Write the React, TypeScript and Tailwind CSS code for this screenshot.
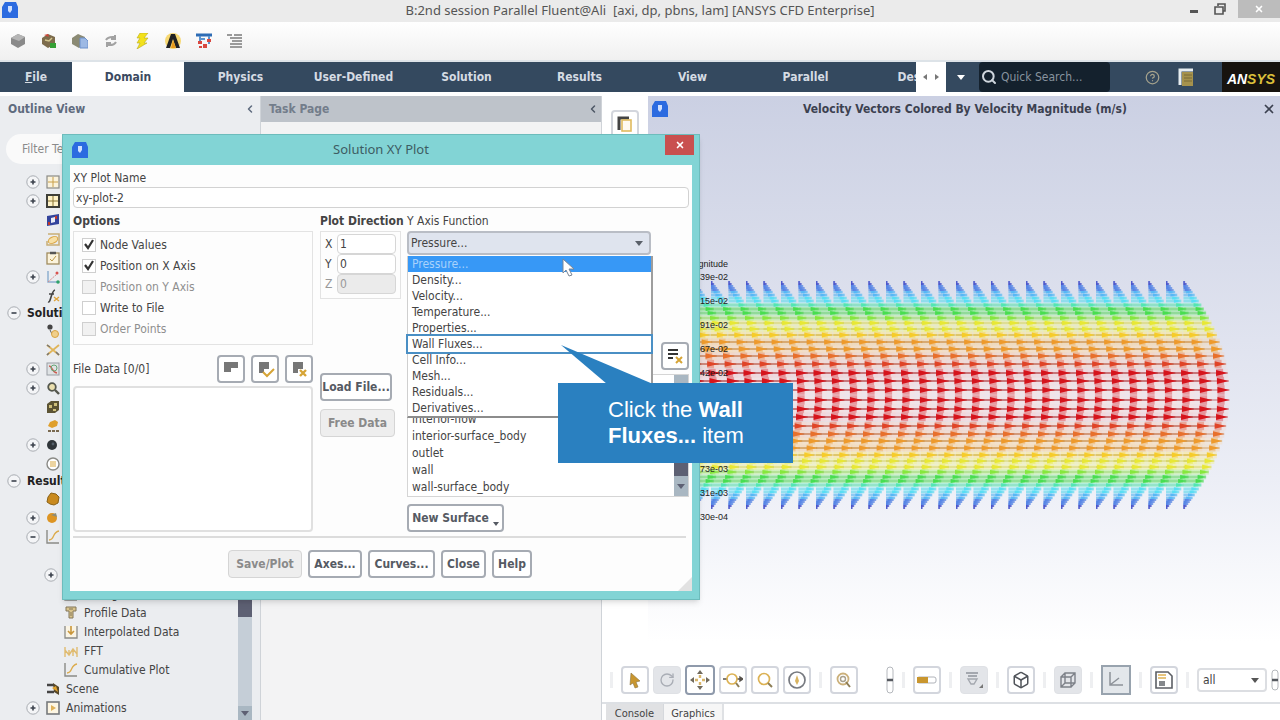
import type { ReactNode } from "react";
import { ChevronLeft, X, Search, CircleHelp, RotateCw, Box } from "lucide-react";

const TABS = ["Physics", "User-Defined", "Solution", "Results", "View", "Parallel", "Design"];

const OPTIONS = [
  { label: "Node Values", checked: true, disabled: false },
  { label: "Position on X Axis", checked: true, disabled: false },
  { label: "Position on Y Axis", checked: false, disabled: true },
  { label: "Write to File", checked: false, disabled: false },
  { label: "Order Points", checked: false, disabled: true },
];

const FUNCTIONS = [
  "Pressure...",
  "Density...",
  "Velocity...",
  "Temperature...",
  "Properties...",
  "Wall Fluxes...",
  "Cell Info...",
  "Mesh...",
  "Residuals...",
  "Derivatives...",
];

const SURFACES = ["interior-flow", "interior-surface_body", "outlet", "wall", "wall-surface_body"];

const LEGEND = ["2.39e-02", "2.15e-02", "1.91e-02", "1.67e-02", "1.42e-02", "1.19e-02", "9.50e-03", "7.12e-03", "4.73e-03", "2.31e-03", "1.30e-04"];

/* ---------- tree icons, 14x14 ---------- */

const ICONS: Record<string, ReactNode> = {
  grid: (
    <>
      <rect x="1" y="1" width="12" height="12" fill="#fbf3dc" stroke="#8b8b86" strokeWidth="1.2" />
      <path d="M7 2v10M2 7h10" stroke="#c9a04a" />
    </>
  ),
  gridDark: (
    <>
      <rect x="1" y="1" width="12" height="12" fill="#fff3c8" stroke="#3f3f38" strokeWidth="2" />
      <path d="M7 2v10M2 7h10" stroke="#8a7433" />
    </>
  ),
  flag: (
    <>
      <path d="M1 3l12-2v10L1 13z" fill="#33449c" />
      <path d="M5 5l4-1v5l-4 1z" fill="#e8ebf5" />
      <path d="M10 3v3M3 9v3" stroke="#c0392b" strokeWidth="2" />
    </>
  ),
  ring: (
    <>
      <path d="M2 2h11v11H1V9" fill="none" stroke="#c9ae76" strokeWidth="1.5" />
      <ellipse cx="7" cy="8" rx="5" ry="3" fill="#f7dfa4" stroke="#d9a441" transform="rotate(-25 7 8)" />
    </>
  ),
  clip: (
    <>
      <rect x="1" y="2" width="12" height="11" fill="#fbf3dc" stroke="#a08c5e" strokeWidth="1.3" />
      <path d="M4 2h6" stroke="#555" strokeWidth="2.5" />
      <path d="M4 8l2 2 4-5" fill="none" stroke="#b99545" />
    </>
  ),
  axes: (
    <>
      <path d="M2 1v11h10" fill="none" stroke="#8fb0cf" strokeWidth="1.5" />
      <path d="M2 12L11 4" stroke="#d58b8b" strokeDasharray="2 1" />
      <circle cx="11" cy="3" r="1.5" fill="#d9534f" />
      <circle cx="12" cy="12" r="1.8" fill="#2fa36b" />
    </>
  ),
  fx: (
    <>
      <path d="M2 13c3 1 3-11 7-12M3 5h5" fill="none" stroke="#444" strokeWidth="1.6" />
      <path d="M8 8l5 4M13 8l-5 4" stroke="#dfa53c" strokeWidth="1.4" />
    </>
  ),
  dots: (
    <>
      <circle cx="4" cy="3" r="2.6" fill="#444" />
      <path d="M4 6l2 4" stroke="#555" />
      <circle cx="9" cy="10" r="3.5" fill="#f0cf8a" stroke="#d9a441" />
    </>
  ),
  cross: (
    <>
      <path d="M1 2l12 10M13 2L1 12" stroke="#e0b55a" strokeWidth="1.8" />
      <path d="M1 2l3 2M10 9l3 3M1 12l2-2" stroke="#777" strokeWidth="1.5" />
    </>
  ),
  report: (
    <>
      <rect x="1" y="1" width="12" height="12" fill="#dfe3e5" stroke="#999ea3" />
      <path d="M3 4c4 0 2 6 8 7" fill="none" stroke="#cf5c50" strokeWidth="1.4" />
      <circle cx="8" cy="6" r="3" fill="none" stroke="#67a678" />
    </>
  ),
  magnify: (
    <>
      <circle cx="6" cy="6" r="3.8" fill="#eadfae" stroke="#55584e" strokeWidth="1.8" />
      <path d="M9 9l4 4" stroke="#55584e" strokeWidth="2.4" />
    </>
  ),
  cube: (
    <>
      <path d="M1 4l4-3h8v9l-4 3H1z" fill="#5c5434" />
      <path d="M3 5h3v3H3zM8 3h3v3H8zM7 9h3v2H7z" fill="#cfc07a" />
    </>
  ),
  cad: (
    <>
      <path d="M2 7l2-4 5-2 3 2-1 4-5 2z" fill="#dfa02c" />
      <path d="M2 12h3M6 12h3M10 12h3" stroke="#7a6a50" strokeWidth="2" />
    </>
  ),
  ball: (
    <>
      <circle cx="6" cy="7" r="5" fill="#30363a" />
      <circle cx="7" cy="6" r="1.4" fill="#55606a" />
    </>
  ),
  target: (
    <>
      <circle cx="7" cy="7" r="6" fill="#fff" stroke="#8a8a86" strokeWidth="1.4" />
      <path d="M4 5h6M4 7h6M4 9h6" stroke="#dba941" />
    </>
  ),
  surface: <path d="M2 5l3-4 5 1 3 3-1 6-4 2-4-1-3-2z" fill="#c98a1e" stroke="#8a6218" />,
  sphere: (
    <>
      <circle cx="6" cy="7" r="5" fill="#dd9524" />
      <path d="M5 4l5-2 1 4z" fill="#8d8d7a" />
    </>
  ),
  plot: (
    <>
      <path d="M1 0v13h12" fill="none" stroke="#8b8b86" strokeWidth="1.4" />
      <path d="M3 10c6 0 3-8 10-9" fill="none" stroke="#dcab4c" strokeWidth="1.3" />
    </>
  ),
  profile: (
    <>
      <path d="M2 1h10v4H9v7H5V5H2z" fill="#d9c48c" stroke="#82775a" />
      <path d="M5 3h4M6 7h2M6 9h2" stroke="#82775a" />
    </>
  ),
  interp: (
    <>
      <path d="M1 1v12h12V1" fill="#faf4e4" stroke="#8b8b86" strokeWidth="1.3" />
      <path d="M7 1v7M4 6l3 3 3-3" fill="none" stroke="#c9963a" strokeWidth="1.6" />
    </>
  ),
  fft: <path d="M1 3v10M13 3v10M1 6l4 5 4-6 4 5M5 6v6M9 5v7" fill="none" stroke="#e0bb70" strokeWidth="1.4" />,
  scene: (
    <>
      <path d="M1 3h7M1 10h7" stroke="#444" strokeWidth="2.4" />
      <path d="M7 1l6 4v8l-5-3z" fill="#57482a" />
      <path d="M6 6l4-2 2 6z" fill="#e0a22d" />
    </>
  ),
  anim: (
    <>
      <rect x="1" y="1" width="12" height="12" fill="#fdf6e3" stroke="#777a7d" strokeWidth="1.6" />
      <path d="M5 4l5 3-5 3z" fill="#e0b25a" />
    </>
  ),
};

function TreeIcon({ name }: { name: string }) {
  return (
    <svg viewBox="0 0 14 14" className="size-3.5 shrink-0">
      {ICONS[name]}
    </svg>
  );
}

type Row = { icon?: string; label?: string; toggle?: "plus" | "minus"; deep?: boolean };

const SETUP: Row[] = [
  { icon: "grid", toggle: "plus" },
  { icon: "gridDark", toggle: "plus" },
  { icon: "flag" },
  { icon: "ring" },
  { icon: "clip" },
  { icon: "axes", toggle: "plus" },
  { icon: "fx" },
];

const SOLUTION: Row[] = [
  { icon: "dots" },
  { icon: "cross" },
  { icon: "report", toggle: "plus" },
  { icon: "magnify", toggle: "plus" },
  { icon: "cube" },
  { icon: "cad" },
  { icon: "ball", toggle: "plus" },
  { icon: "target" },
];

const RESULTS: Row[] = [
  { icon: "surface" },
  { icon: "sphere", toggle: "plus" },
  { icon: "plot", toggle: "minus" },
  { icon: "plot", deep: true },
  { icon: "plot", deep: true, toggle: "plus" },
  { icon: "plot", label: "Histogram", deep: true },
  { icon: "profile", label: "Profile Data", deep: true },
  { icon: "interp", label: "Interpolated Data", deep: true },
  { icon: "fft", label: "FFT", deep: true },
  { icon: "plot", label: "Cumulative Plot", deep: true },
  { icon: "scene", label: "Scene" },
  { icon: "anim", label: "Animations", toggle: "plus" },
  { icon: "clip", toggle: "plus" },
];

function Toggle({ kind }: { kind?: "plus" | "minus" }) {
  if (!kind) return <span className="w-3.5 shrink-0" />;
  return (
    <button aria-label={kind === "plus" ? "Expand" : "Collapse"} className="size-3.5 shrink-0">
      <svg viewBox="0 0 14 14" className="size-3.5">
        <circle cx="7" cy="7" r="6.2" fill="#f4f5f7" stroke="#a9adb2" />
        <path d={kind === "plus" ? "M4.500 7h5M7 4.500v5" : "M4.500 7h5"} stroke="#3c434d" strokeWidth="1.6" />
      </svg>
    </button>
  );
}

function TreeRows({ rows }: { rows: Row[] }) {
  return (
    <>
      {rows.map((row, i) => (
        <li key={i} className={`flex h-[19px] items-center ${row.deep ? "pl-11" : "pl-[26px]"}`}>
          <Toggle kind={row.toggle} />
          <span className="ml-1.5 flex items-center gap-1.5">
            {row.icon && <TreeIcon name={row.icon} />}
            {row.label}
          </span>
        </li>
      ))}
    </>
  );
}

function TreeHeading({ label }: { label: string }) {
  return (
    <li className="flex h-4 items-center gap-1.5 pl-[7px] font-bold text-[#222]">
      <Toggle kind="minus" />
      {label}
    </li>
  );
}

/* ---------- small shared pieces ---------- */

function FluentMark() {
  return (
    <svg viewBox="0 0 16 16" className="size-4 shrink-0">
      <path d="M3 0h11l2 5v11H0V5z" fill="#2c6be0" />
      <path d="M6 4h4v4L8 11 6 9z" fill="#cfe0ff" />
    </svg>
  );
}

function Caret() {
  return (
    <svg viewBox="0 0 10 6" className="pointer-events-none h-[5px] w-2">
      <path d="M0 0h10L5 6z" fill="currentColor" />
    </svg>
  );
}

function DialogButton({ children, disabled, className = "" }: { children: ReactNode; disabled?: boolean; className?: string }) {
  return (
    <button
      disabled={disabled}
      className={`h-7 rounded text-xs font-bold whitespace-nowrap ${
        disabled ? "border border-[#d5d5d5] bg-[#eeeeee] text-[#8a8a8a]" : "border-2 border-[#a6abb3] bg-white text-[#555a63]"
      } ${className}`}
    >
      {children}
    </button>
  );
}

function IconButton({ label, children }: { label: string; children: ReactNode }) {
  return (
    <button aria-label={label} className="flex size-7 items-center justify-center rounded border-2 border-[#a6abb3] bg-white">
      <svg viewBox="0 0 20 20" className="size-5">
        {children}
      </svg>
    </button>
  );
}

function ToolButton({ label, children, state }: { label: string; children: ReactNode; state?: "disabled" | "active" }) {
  const look =
    state === "active"
      ? "size-[30px] border-2 border-[#8f9aab]"
      : state === "disabled"
        ? "size-7 border border-[#dfe1e5] bg-[#e3e5e9]"
        : "size-7 border-2 border-[#d3d6dd]";
  return (
    <button aria-label={label} className={`flex shrink-0 items-center justify-center rounded ${look}`}>
      <svg viewBox="0 0 20 20" className="size-5" fill="none">
        {children}
      </svg>
    </button>
  );
}

function Divider() {
  return (
    <span className="flex w-[11px] shrink-0 justify-center">
      <span className="h-4 w-[3px] bg-[#eeeff1]" />
    </span>
  );
}

/* ---------- velocity vectors ---------- */

const OFFSETS = [5, 14, 22, 31, 39, 46, 53, 60, 66, 72, 77, 82, 86, 90, 94, 97, 100, 103, 105, 107, 109, 111, 113];
const COLUMNS = Array.from({ length: 31 }, (_, i) => 535.5 - i * 17.5);

function speedColor(s: number) {
  // jet style ramp, blue at the wall and red on the axis
  const stops: [number, string][] = [
    [0.09, "#4a55cc"],
    [0.18, "#5585e6"],
    [0.25, "#58b8f6"],
    [0.36, "#58def4"],
    [0.41, "#52e6b4"],
    [0.52, "#48de50"],
    [0.58, "#86e83c"],
    [0.7, "#e8e834"],
    [0.76, "#f6cc2a"],
    [0.85, "#ee9a2c"],
    [0.91, "#e8702c"],
    [0.95, "#e04428"],
  ];
  const hit = stops.find(([limit]) => s < limit);
  return hit ? hit[1] : "#d6141c";
}

function VelocityVectors() {
  const rows = OFFSETS.flatMap((offset, i) => {
    const before = i === 0 ? -offset : OFFSETS[i - 1];
    const after = OFFSETS[i + 1] ?? offset + 2;
    const pitch = (after - before) / 2;
    return [
      { r: -offset, pitch },
      { r: offset, pitch },
    ];
  });
  return (
    <svg viewBox="0 0 590 240" className="h-60 w-[590px]">
      {rows.map(({ r, pitch }) => {
        const s = 1 - (r / 115) * (r / 115);
        const len = 46 * s;
        const head = Math.min(len, 5 + 7 * s);
        const half = 1 + 2 * s;
        const y = 120 + r;
        const color = speedColor(s);
        return (
          <g key={r} fill={color}>
            {COLUMNS.map((x) => (
              <g key={x}>
                <rect x={x} y={y - pitch / 2} width={len} height={pitch} fill="#ffffff" opacity="0.3" />
                <rect x={x} y={y - pitch / 2} width={len} height={pitch} opacity={0.04 + 0.6 * (1 - s)} />
              </g>
            ))}
            {COLUMNS.map((x) => (
              <g key={x}>
                <rect x={x + len - head} y={y - pitch / 2} width={head * 0.6} height={pitch} opacity="0.35" />
                <path d={`M${x} ${y}h${len}`} stroke={color} strokeWidth="1" opacity="0.5" />
                <path d={`M${x} ${y}h${len}`} stroke="#504038" strokeWidth="1" opacity={0.2 * s} />
                <path d={`M${x + len} ${y}l${-head} ${-half}v${half * 2}z`} />
              </g>
            ))}
          </g>
        );
      })}
    </svg>
  );
}

/* ---------- regions ---------- */

function TitleBar() {
  return (
    <header className="relative flex h-[22px] shrink-0 items-center justify-center bg-[#ebebeb] font-['Noto_Sans',sans-serif] text-[13px] text-[#555]">
      <span className="absolute left-0.5 top-0.5">
        <FluentMark />
      </span>
      <h1>B:2nd session Parallel Fluent@Ali&nbsp; [axi, dp, pbns, lam] [ANSYS CFD Enterprise]</h1>
      <div className="absolute right-0 top-0 flex h-[18px] items-center">
        <button aria-label="Minimize" className="mr-4 mt-1 h-[3px] w-2 bg-[#555]" />
        <button aria-label="Restore" className="mr-3">
          <svg viewBox="0 0 12 12" className="size-3" fill="none" stroke="#555" strokeWidth="1.6">
            <path d="M4 3V1h7v7H9M1 4h8v7H1z" />
          </svg>
        </button>
        <button aria-label="Close" className="flex h-[18px] w-[42px] items-center justify-center bg-[#bcbcbc] text-white">
          <X size={10} strokeWidth={4} />
        </button>
      </div>
    </header>
  );
}

function QuickBar() {
  return (
    <div className="flex h-10 shrink-0 items-center gap-[15px] border-b-2 border-[#dde3e8] bg-linear-to-b from-white to-[#f0f0f0] pl-2.5">
      <button aria-label="Geometry">
        <svg viewBox="0 0 16 16" className="size-4">
          <path d="M1 5l7-4 7 3v7l-7 4-7-4z" fill="#8a8a8a" />
          <path d="M1 5l7-4 7 3-6 4z" fill="#b5b5b5" />
        </svg>
      </button>
      <button aria-label="Mesh">
        <svg viewBox="0 0 16 16" className="size-4">
          <path d="M1 5l6-4 7 3v7l-7 4-6-4z" fill="#7d6c4c" />
          <path d="M3 2l4-1 1 3z" fill="#cf4437" />
          <path d="M4 7l4 1 3-3" fill="none" stroke="#d3c68e" strokeWidth="1.5" />
          <path d="M9 10h6v5H9z" fill="#35a035" />
        </svg>
      </button>
      <button aria-label="Setup">
        <svg viewBox="0 0 16 16" className="size-4">
          <path d="M0 5l6-4 7 3v7l-6 4-7-4z" fill="#8b8a74" />
          <path d="M8 5h5l3 3v7H8z" fill="#9db9e4" stroke="#6d91cc" />
        </svg>
      </button>
      <button aria-label="Refresh">
        <svg viewBox="0 0 16 16" className="size-4" fill="none" stroke="#a2a2a2" strokeWidth="2">
          <path d="M3 7c2-4 6-3 9-3M12 2v4H8M13 9c-2 4-6 3-9 3M4 14v-4h4" />
        </svg>
      </button>
      <button aria-label="Update">
        <svg viewBox="0 0 16 16" className="size-4">
          <path d="M6 0h8l-4 5h4l-4 5h3L3 16l3-6H3l3-5H3z" fill="#f3e11b" stroke="#b9ab22" strokeWidth=".6" />
        </svg>
      </button>
      <button aria-label="Workbench">
        <svg viewBox="0 0 16 16" className="size-4">
          <circle cx="8" cy="8" r="8" fill="#f7d872" />
          <path d="M6 1h4l5 14h-4L8 6l-3 9H1z" fill="#222" />
          <path d="M8 7l3 8H6z" fill="#e89a1b" />
        </svg>
      </button>
      <button aria-label="Parameters">
        <svg viewBox="0 0 16 16" className="size-4" fill="none">
          <path d="M0 2h16" stroke="#2e6cb5" strokeWidth="3" />
          <path d="M4 3v5M13 3v8M4 6h5" stroke="#5b93cf" strokeWidth="2" />
          <path d="M2 8h4v3H2zM11 6h4v3h-4zM7 11h4v4H7zM3 13h3v2H3z" fill="#d94840" />
        </svg>
      </button>
      <button aria-label="List">
        <svg viewBox="0 0 16 16" className="size-4" fill="none" stroke="#9a9a9a" strokeWidth="2">
          <path d="M0 2h5M7 2h8M3 5h12M5 8h10M3 11h12M3 14h12" />
        </svg>
      </button>
    </div>
  );
}

function Ribbon() {
  return (
    <nav className="flex h-[30px] shrink-0 bg-[#34495f] text-xs font-bold text-[#d5dbe3]">
      <a href="#file" className="flex w-[72px] items-center justify-center">
        <span>
          <u>F</u>ile
        </span>
      </a>
      <a href="#domain" className="flex w-28 items-center justify-center bg-white text-[#3b4a60]">
        Domain
      </a>
      <div className="flex min-w-0 flex-1 overflow-hidden">
        {TABS.map((tab) => (
          <a key={tab} href={`#${tab}`} className="flex w-[113px] shrink-0 items-center justify-center">
            {tab}
          </a>
        ))}
      </div>
      <div className="flex w-[30px] items-center justify-center gap-2 bg-white text-[#777]">
        <button aria-label="Scroll tabs left">
          <svg viewBox="0 0 4 6" className="h-1.5 w-1">
            <path d="M4 0v6L0 3z" fill="currentColor" />
          </svg>
        </button>
        <button aria-label="Scroll tabs right">
          <svg viewBox="0 0 4 6" className="h-1.5 w-1">
            <path d="M0 0v6l4-3z" fill="currentColor" />
          </svg>
        </button>
      </div>
      <button aria-label="More" className="flex w-[33px] items-center justify-center pr-1 text-white">
        <Caret />
      </button>
      <label className="flex w-[131px] items-center gap-1 rounded-sm bg-[#14212d] pl-0.5">
        <Search size={16} strokeWidth={3} className="shrink-0 text-[#cfd6dd]" />
        <input
          aria-label="Quick Search"
          placeholder="Quick Search..."
          className="w-full min-w-0 bg-transparent font-normal outline-none placeholder:text-[#88939e]"
        />
      </label>
      <div className="flex w-28 items-center justify-end gap-[18px] pr-7">
        <CircleHelp size={15} className="text-[#a5a28d]" />
        <svg viewBox="0 0 16 18" className="h-[18px] w-4">
          <path d="M2 17V2h13" fill="none" stroke="#e7edf0" strokeWidth="3" />
          <path d="M4 4h11v14H4z" fill="#a5924d" />
          <path d="M6 7h8M6 10h8M6 13h8" stroke="#786a38" />
        </svg>
      </div>
      <div className="flex w-[58px] items-center justify-center bg-[#17130f] pt-1 font-['Liberation_Sans',sans-serif] text-sm italic">
        <span className="text-white">AN</span>
        <span className="text-[#dcc03b]">SYS</span>
      </div>
    </nav>
  );
}

function OutlineView() {
  return (
    <aside className="flex w-[260px] shrink-0 flex-col bg-[#ebedf0]">
      <div className="flex h-[26px] shrink-0 items-center justify-between px-2 font-bold text-[#5f6b7e]">
        <h2>Outline View</h2>
        <ChevronLeft size={12} strokeWidth={3} className="-mr-1" />
      </div>
      <div className="h-[42px] shrink-0 px-1.5 pt-3">
        <input
          aria-label="Filter Text"
          placeholder="Filter Text"
          className="h-[30px] w-full rounded-full bg-[#fafafa] px-4 outline-none placeholder:text-[#8b8b8b]"
        />
      </div>
      <div className="flex min-h-0 flex-1 pr-2">
        <ul className="flex-1 overflow-hidden pt-2 text-[#444]">
          <TreeRows rows={SETUP} />
          <TreeHeading label="Solution" />
          <TreeRows rows={SOLUTION} />
          <TreeHeading label="Results" />
          <TreeRows rows={RESULTS} />
        </ul>
        <div className="flex w-3.5 flex-col bg-[#c5ced7]">
          <div className="h-[453px] bg-[#5d6073]" />
          <div className="mt-auto flex h-3.5 items-center justify-center bg-[#a9b7c2] text-[#5d6073]">
            <Caret />
          </div>
        </div>
      </div>
    </aside>
  );
}

function TaskPage() {
  return (
    <section className="flex w-[342px] shrink-0 flex-col border-x border-[#cfd3d8] bg-[#f3f3f4]">
      <div className="flex h-[26px] items-center justify-between bg-[#bec3ca] pl-2 pr-0.5 font-bold text-[#737d8b]">
        <h2>Task Page</h2>
        <ChevronLeft size={12} strokeWidth={3} className="text-[#4d5765]" />
      </div>
    </section>
  );
}

function Graphics() {
  return (
    <section className="flex min-w-0 flex-1 flex-col bg-white">
      <div className="flex min-h-0 flex-1">
        <div className="flex w-[46px] shrink-0 justify-center pt-3.5">
          <button aria-label="Copy view" className="flex size-7 items-center justify-center rounded border-2 border-[#d3d6dd]">
            <svg viewBox="0 0 16 16" className="size-4" fill="none">
              <path d="M2 14V2h10" stroke="#444" strokeWidth="3" />
              <rect x="5" y="4" width="9" height="11" fill="#fffaf0" stroke="#e0bb5e" strokeWidth="1.6" />
            </svg>
          </button>
        </div>
        <div className="flex min-w-0 flex-1 flex-col overflow-hidden bg-linear-to-b from-[#cbd0e3] via-[#eceef6] via-70% to-white">
          <div className="flex h-[26px] shrink-0 items-center justify-between pl-1 pr-1 font-bold text-[#3c4150]">
            <FluentMark />
            <h2>Velocity Vectors Colored By Velocity Magnitude (m/s)</h2>
            <button aria-label="Close graphics">
              <X size={14} strokeWidth={3} />
            </button>
          </div>
          <div className="relative mt-[153px]">
            <VelocityVectors />
            <div className="absolute -top-4 left-0 w-20 text-right font-['Liberation_Sans',sans-serif] text-[9px] text-[#222]">
              <p className="h-2.5 leading-[10px]">Velocity Magnitude</p>
              {LEGEND.map((value) => (
                <p key={value} className="h-6 leading-4">
                  {value}
                </p>
              ))}
            </div>
          </div>
        </div>
      </div>

      <div className="flex h-[62px] shrink-0 items-center gap-1 overflow-hidden border-b-2 border-[#dde0e4] pl-1 pt-4">
        <Divider />
        <ToolButton label="Select">
          <path d="M6 3l9 8-4 1 2 5-3 1-2-5-3 2z" fill="#c9962e" stroke="#8a7440" strokeWidth=".6" />
        </ToolButton>
        <ToolButton label="Rotate" state="disabled">
          <RotateCw x="2" y="2" size={16} color="#a9adb5" />
        </ToolButton>
        <ToolButton label="Pan" state="active">
          <path d="M10 0l3 4H7zM10 20l3-4H7zM0 10l4-3v6zM20 10l-4-3v6z" fill="#716a5d" />
          <path d="M10 5v3M10 12v3M5 10h3M12 10h3" stroke="#d9b66a" strokeWidth="2.4" />
        </ToolButton>
        <ToolButton label="Zoom in or out">
          <path d="M0 9h4M14 9h6M17 7l3 2-3 2z" stroke="#55504a" strokeWidth="1.4" />
          <circle cx="9" cy="9" r="5" stroke="#dcb254" strokeWidth="1.7" fill="#fff" />
          <path d="M13 13l3 4" stroke="#8d7d55" strokeWidth="2" />
        </ToolButton>
        <ToolButton label="Zoom to area">
          <circle cx="9" cy="9" r="5.500" stroke="#dcb254" strokeWidth="1.7" />
          <path d="M13 13l4 4" stroke="#8d7d55" strokeWidth="2" />
        </ToolButton>
        <ToolButton label="Probe">
          <circle cx="10" cy="10" r="8" stroke="#777a80" strokeWidth="1.7" />
          <path d="M10 5l2 6-2 4-2-4z" fill="#d9b460" />
        </ToolButton>
        <Divider />
        <ToolButton label="Fit to window">
          <circle cx="9" cy="9" r="5.500" stroke="#cbb07a" strokeWidth="1.8" />
          <circle cx="9" cy="9" r="2.500" stroke="#a9a18d" strokeWidth="1.4" />
          <path d="M12 12l4 5" stroke="#8d7d55" strokeWidth="2" />
        </ToolButton>
        <svg viewBox="0 0 8 28" className="ml-6 h-7 w-2 shrink-0" fill="none">
          <rect x="1" y="1" width="6" height="26" rx="3" stroke="#b5b8bd" />
          <path d="M1 14h6" stroke="#55595f" strokeWidth="2.5" />
        </svg>
        <Divider />
        <ToolButton label="Transparency">
          <rect x="0" y="7" width="19" height="6" rx="2" stroke="#b0b3ba" />
          <rect x="0" y="7" width="11" height="6" fill="#c9962e" />
        </ToolButton>
        <Divider />
        <ToolButton label="Lights" state="disabled">
          <path d="M2 3h12M4 6h9" stroke="#a4a8af" strokeWidth="1.8" />
          <path d="M4 9h9l-3 5H7z" stroke="#a4a8af" strokeWidth="1.4" />
          <path d="M19 14v4h-4z" fill="#777" />
        </ToolButton>
        <Divider />
        <ToolButton label="Isometric view">
          <Box x="1" y="1" size={18} color="#50545a" />
        </ToolButton>
        <Divider />
        <ToolButton label="Projection" state="disabled">
          <path d="M3 7h10v10H3zM3 7l4-4h10v10l-4 4M7 3v10h10M3 17l4-4M13 7l4-4" stroke="#7d8188" strokeWidth="1.4" />
        </ToolButton>
        <Divider />
        <button aria-label="Axis triad" className="flex size-[30px] shrink-0 items-center justify-center border-2 border-[#98a3ae] bg-[#e3e7eb]">
          <svg viewBox="0 0 20 20" className="size-5" fill="none" stroke="#8d9299">
            <path d="M4 2v13h13M4 15l9-7" strokeWidth="1.5" />
          </svg>
        </button>
        <Divider />
        <ToolButton label="Save picture">
          <path d="M2 2h12l4 4v12H2z" stroke="#5c5f65" strokeWidth="1.6" />
          <path d="M4 5h8M4 8h8" stroke="#e0b254" strokeWidth="1.6" />
          <path d="M5 11h6v5H5z" fill="#85888c" />
        </ToolButton>
        <Divider />
        <div className="relative flex shrink-0 items-center">
          <select aria-label="Views" className="h-6 w-[70px] appearance-none rounded border-2 border-[#dcdee2] bg-white pl-1 text-xs text-[#444]">
            <option>all</option>
          </select>
          <span className="pointer-events-none absolute right-2 text-[#555]">
            <Caret />
          </span>
        </div>
        <svg viewBox="0 0 8 22" className="h-[22px] w-2 shrink-0" fill="none">
          <rect x="1" y="1" width="6" height="20" rx="3" stroke="#b5b8bd" />
          <path d="M1 11h6" stroke="#55595f" strokeWidth="2.5" />
        </svg>
      </div>
      <div className="flex h-4 shrink-0 overflow-hidden pl-1 text-[11px] text-[#444]">
        <button className="h-5 w-[58px] border-r border-[#d5d8dc] bg-[#e0e1e3]">Console</button>
        <button className="h-5 w-[60px] border-r-2 border-[#dfe1e4] bg-[#f6f6f6] pt-px">Graphics</button>
      </div>
    </section>
  );
}

function PlotDialog() {
  return (
    <div
      role="dialog"
      aria-labelledby="dialog-title"
      className="absolute left-[62px] top-[134px] w-[638px] border border-[#6dbcbc] bg-[#82d4d5] px-[7px] pb-2 shadow-md"
    >
      <div className="relative flex h-[30px] items-center justify-center">
        <span className="absolute left-0.5">
          <FluentMark />
        </span>
        <h2 id="dialog-title" className="font-['Noto_Sans',sans-serif] text-[13px] text-[#3d5c63]">
          Solution XY Plot
        </h2>
        <button aria-label="Close dialog" className="absolute -right-0.5 top-0 flex h-5 w-[29px] items-center justify-center bg-[#c9504f] text-white">
          <X size={10} strokeWidth={4} />
        </button>
      </div>

      <div className="relative bg-[#fdfdfd] px-[3px] pb-[13px] pt-1 text-[#444]">
        <label htmlFor="plot-name" className="block h-[18px] leading-[18px]">
          XY Plot Name
        </label>
        <input id="plot-name" defaultValue="xy-plot-2" className="h-[21px] w-[616px] rounded border border-[#d2d2d2] bg-white px-0.5 outline-none" />

        <div className="mt-1 flex">
          <div className="w-60">
            <h3 className="h-[19px] font-bold leading-[18px]">Options</h3>
            <div className="h-[114px] border border-[#e3e3e3] pl-2 pt-0.5">
              {OPTIONS.map((o) => (
                <label key={o.label} className={`flex h-[21px] items-center gap-1 ${o.disabled ? "text-[#8f8f8f]" : ""}`}>
                  <span className="relative size-3.5">
                    <input
                      type="checkbox"
                      defaultChecked={o.checked}
                      disabled={o.disabled}
                      className="peer block size-3.5 appearance-none border border-[#cfcfcf] bg-white disabled:bg-[#f1f1f1]"
                    />
                    <svg viewBox="0 0 14 14" className="pointer-events-none absolute inset-0 hidden size-3.5 peer-checked:block">
                      <path d="M3 6l3 4 5-8" fill="none" stroke="#333" strokeWidth="2.2" />
                    </svg>
                  </span>
                  {o.label}
                </label>
              ))}
            </div>
            <div className="mt-[9px] flex h-[30px] items-center gap-1.5">
              <span id="file-data" className="mr-auto">
                File Data [0/0]
              </span>
              <IconButton label="Toggle list">
                <path d="M3 4h14M3 6h14M3 8h14M3 10h7M3 12h7" stroke="#777" strokeWidth="2" />
              </IconButton>
              <IconButton label="Select all">
                <path d="M4 3h10v7H9v4H4z" fill="#777" />
                <path d="M8 13l4 4 7-7" fill="none" stroke="#d6a436" strokeWidth="2" />
              </IconButton>
              <IconButton label="Deselect all">
                <path d="M4 3h10v7H9v4H4z" fill="#777" />
                <path d="M11 11l6 6M17 11l-6 6" stroke="#d6a436" strokeWidth="2.4" />
              </IconButton>
            </div>
            <div role="listbox" aria-labelledby="file-data" className="mt-0.5 h-[146px] rounded-sm border-2 border-[#e0e0e0] bg-white" />
          </div>

          <div className="ml-[7px] w-[81px]">
            <h3 className="h-[19px] whitespace-nowrap font-bold leading-[18px]">Plot Direction</h3>
            <div className="h-[68px] border border-[#e3e3e3] px-1 pt-0.5">
              {[
                ["X", "1"],
                ["Y", "0"],
                ["Z", "0"],
              ].map(([axis, value]) => (
                <label key={axis} className={`flex h-5 items-center gap-1 ${axis === "Z" ? "text-[#999]" : ""}`}>
                  <span className="w-2">{axis}</span>
                  <input
                    defaultValue={value}
                    disabled={axis === "Z"}
                    className="h-5 w-[59px] rounded border border-[#d6d6d6] bg-white px-0.5 outline-none disabled:bg-[#ebebeb]"
                  />
                </label>
              ))}
            </div>
            <DialogButton className="mt-[74px] w-[72px]">Load File...</DialogButton>
            <DialogButton disabled className="mt-2 w-[75px]">
              Free Data
            </DialogButton>
          </div>

          <div className="relative ml-1.5 w-[282px]">
            <label htmlFor="y-function" className="block h-[19px] leading-[18px]">
              Y Axis Function
            </label>
            <div className="relative flex w-[244px] items-center">
              <select id="y-function" className="h-6 w-full appearance-none rounded border-2 border-[#b9bdc5] bg-[#dfe4ee] pl-0.5">
                <option>Pressure...</option>
              </select>
              <span className="pointer-events-none absolute right-2 text-[#5a6069]">
                <Caret />
              </span>
            </div>
            <div className="mt-[87px] flex justify-end">
              <IconButton label="Deselect surfaces">
                <path d="M3 4h10M3 8h10M3 12h5" stroke="#333" strokeWidth="2" />
                <path d="M11 11l6 6M17 11l-6 6" stroke="#d6a436" strokeWidth="2" />
              </IconButton>
            </div>
            <div className="mt-1 flex h-[123px] border border-[#d5d5d5] bg-white">
              <ul role="listbox" aria-label="Surfaces" className="flex flex-1 flex-col justify-end pl-1">
                {SURFACES.map((s) => (
                  <li key={s} role="option" className="h-[17px] leading-[17px]">
                    {s}
                  </li>
                ))}
              </ul>
              <div className="flex w-3.5 flex-col bg-[#5d6073]">
                <div className="h-[18px] bg-[#a9b7c2]" />
                <div className="mt-auto flex h-5 items-center justify-center bg-[#a9b7c2] text-[#5d6073]">
                  <Caret />
                </div>
              </div>
            </div>
            <DialogButton className="mt-[7px] w-[97px]">
              <span className="flex items-end justify-center gap-1">
                New Surface
                <svg viewBox="0 0 6 4" className="h-1 w-1.5">
                  <path d="M0 0h6L3 4z" fill="currentColor" />
                </svg>
              </span>
            </DialogButton>

            {/* open drop-down */}
            <ul
              role="listbox"
              aria-label="Y Axis Function choices"
              className="absolute left-0 top-11 w-[246px] border-b-2 border-l border-r-2 border-b-[#8c8c8c] border-l-[#cfcfcf] border-r-[#9d9d9d] bg-white"
            >
              {FUNCTIONS.map((f) => (
                <li
                  key={f}
                  role="option"
                  className={`h-4 pl-1 leading-4 ${f === "Pressure..." ? "bg-[#3798f6] text-[#a9d2fb]" : ""} ${
                    f === "Wall Fluxes..." ? "outline-2 outline-[#4a8fc4]" : ""
                  }`}
                >
                  {f}
                </li>
              ))}
            </ul>
          </div>
        </div>

        <hr className="mr-[3px] mt-1 border-t-2 border-[#dcdcdc]" />
        <div className="mt-3 flex justify-center gap-1.5 pr-0.5">
          <DialogButton disabled className="w-[74px]">
            Save/Plot
          </DialogButton>
          <DialogButton className="w-[54px]">Axes...</DialogButton>
          <DialogButton className="w-[67px]">Curves...</DialogButton>
          <DialogButton className="w-[45px]">Close</DialogButton>
          <DialogButton className="w-10">Help</DialogButton>
        </div>
        <svg viewBox="0 0 14 14" className="absolute bottom-0 right-0 size-3.5">
          <path d="M14 0v14H0z" fill="#e2e2e2" />
        </svg>
      </div>

      {/* instruction callout */}
      <svg viewBox="0 0 92 40" className="absolute left-[498px] top-[210px] h-10 w-[92px]">
        <path d="M0 0L92 39H46z" fill="#2a80c0" />
      </svg>
      <div className="absolute left-[495px] top-[248px] w-[235px] bg-[#2a80c0] py-[14px] pl-[50px] font-['Liberation_Sans',sans-serif] text-[22px] leading-[26px] text-white">
        Click the <b>Wall</b>
        <br />
        <b>Fluxes...</b> item
      </div>
      <svg viewBox="0 0 14 20" className="absolute left-[499px] top-[123px] h-5 w-3.5">
        <path d="M1 1v14l3-3 3 6 3-1-3-6h5z" fill="#fff" stroke="#7a8696" />
      </svg>
    </div>
  );
}

export default function App() {
  return (
    <div className="relative flex h-screen flex-col overflow-hidden bg-white font-['DejaVu_Sans_Condensed','DejaVu_Sans',sans-serif] text-xs">
      <TitleBar />
      <QuickBar />
      <Ribbon />
      <main className="mt-1 flex min-h-0 flex-1">
        <OutlineView />
        <TaskPage />
        <Graphics />
      </main>
      <PlotDialog />
    </div>
  );
}
